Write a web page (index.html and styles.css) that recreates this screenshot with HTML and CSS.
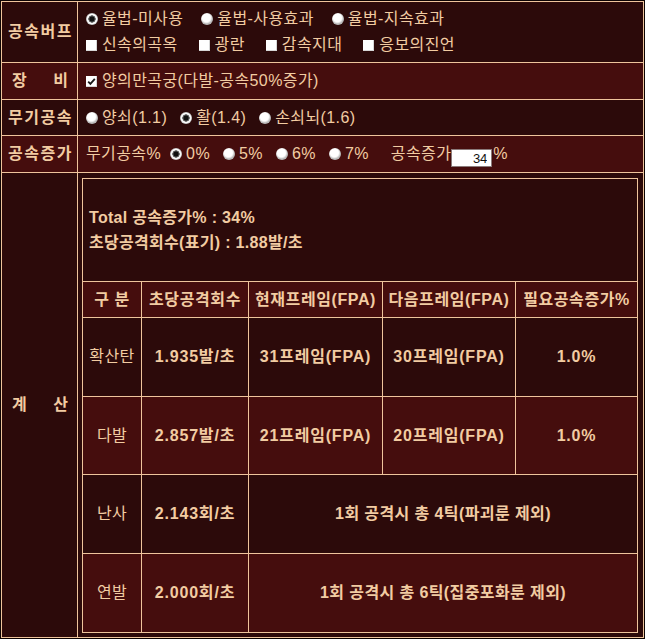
FILE: index.html
```html
<!DOCTYPE html>
<html lang="ko">
<head>
<meta charset="utf-8">
<title>공속 계산기</title>
<link rel="stylesheet" href="styles.css">
</head>
<body>
<div class="frame">
  <div class="label dark">공속버프</div>
  <div class="cell dark buff">
    <div class="line l1">
      <span class="opt"><span class="radio on"></span>율법-미사용</span>
      <span class="opt"><span class="radio"></span>율법-사용효과</span>
      <span class="opt"><span class="radio"></span>율법-지속효과</span>
    </div>
    <div class="line l2">
      <span class="opt"><span class="check"></span>신속의곡옥</span>
      <span class="opt"><span class="check"></span>광란</span>
      <span class="opt"><span class="check"></span>감속지대</span>
      <span class="opt"><span class="check"></span>응보의진언</span>
    </div>
  </div>

  <div class="label red spread"><span>장</span><span>비</span></div>
  <div class="cell red">
    <span class="opt"><span class="check on"><svg viewBox="0 0 11 11" width="11" height="11"><path d="M2.2 5.6 L4.4 7.9 L8.8 2.8" fill="none" stroke="#1a1a1a" stroke-width="1.8"/></svg></span>양의만곡궁(다발-공속50%증가)</span>
  </div>

  <div class="label dark">무기공속</div>
  <div class="cell dark r3">
    <span class="opt"><span class="radio"></span>양쇠(1.1)</span>
    <span class="opt"><span class="radio on"></span>활(1.4)</span>
    <span class="opt"><span class="radio"></span>손쇠뇌(1.6)</span>
  </div>

  <div class="label red">공속증가</div>
  <div class="cell red r4">
    <span class="txt first">무기공속%</span>
    <span class="opt"><span class="radio on"></span>0%</span>
    <span class="opt"><span class="radio"></span>5%</span>
    <span class="opt"><span class="radio"></span>6%</span>
    <span class="opt"><span class="radio"></span>7%</span>
    <span class="extra">공속증가<input class="num" type="text" value="34" readonly><span class="pct">%</span></span>
  </div>

  <div class="label dark spread"><span>계</span><span>산</span></div>
  <div class="cell dark calc">
    <div class="grid">
      <div class="g total dark">
        <div>Total 공속증가% : 34%</div>
        <div>초당공격회수(표기) : 1.88발/초</div>
      </div>

      <div class="g red hd">구 분</div>
      <div class="g red hd">초당공격회수</div>
      <div class="g red hd">현재프레임(FPA)</div>
      <div class="g red hd">다음프레임(FPA)</div>
      <div class="g red hd">필요공속증가%</div>

      <div class="g dark nm">확산탄</div>
      <div class="g dark bd">1.935발/초</div>
      <div class="g dark bd">31프레임(FPA)</div>
      <div class="g dark bd">30프레임(FPA)</div>
      <div class="g dark bd">1.0%</div>

      <div class="g red nm">다발</div>
      <div class="g red bd">2.857발/초</div>
      <div class="g red bd">21프레임(FPA)</div>
      <div class="g red bd">20프레임(FPA)</div>
      <div class="g red bd">1.0%</div>

      <div class="g dark nm">난사</div>
      <div class="g dark bd">2.143회/초</div>
      <div class="g dark bd span3">1회 공격시 총 4틱(파괴룬 제외)</div>

      <div class="g red nm">연발</div>
      <div class="g red bd">2.000회/초</div>
      <div class="g red bd span3">1회 공격시 총 6틱(집중포화룬 제외)</div>
    </div>
  </div>
</div>
</body>
</html>
```

FILE: styles.css
```css
html, body {
  margin: 0;
  background: #0c0303;
}
body {
  padding: 1px;
  font-family: "Liberation Sans", "Noto Sans CJK KR", sans-serif;
  font-size: 16px;
  color: #f2cca2;
}

.frame {
  display: grid;
  grid-template-columns: 75px 565px;
  grid-template-rows: 60px 36px 35px 36px 464px;
  gap: 1px;
  padding: 1px;
  width: 643px;
  box-sizing: border-box;
  background: #efc49c;
}

.dark { background: #2c0a0a; }
.red { background: #450d0d; }

.label {
  display: flex;
  align-items: center;
  justify-content: center;
  font-size: 16px;
  font-weight: bold;
  line-height: 20px;
  letter-spacing: 1.5px;
  padding-left: 2px;
}
.label.spread {
  justify-content: space-between;
  padding: 0 9px 0 10px;
  letter-spacing: 0;
}

.cell {
  display: flex;
  align-items: center;
  padding-left: 8px;
  line-height: 20px;
  white-space: nowrap;
  letter-spacing: 0.4px;
}

.buff {
  flex-direction: column;
  align-items: flex-start;
  justify-content: center;
}
.line {
  display: flex;
  align-items: center;
  height: 26px;
}
.l1 { gap: 18px; }
.l2 { gap: 21px; }
.r3 { gap: 13px; }
.r4 { gap: 13px; }
.r4 .first { margin-right: -4px; }
.r4 .extra {
  display: inline-flex;
  align-items: center;
  margin-left: 9px;
}
.r4 .pct { margin-left: 1px; }

.opt {
  display: inline-flex;
  align-items: center;
}

.radio {
  display: inline-block;
  width: 12px;
  height: 12px;
  border-radius: 50%;
  margin-right: 4px;
  background: radial-gradient(circle at 45% 40%, #ffffff 0 4px, #e4e4e4 5px, #b9b9b9 6px);
}
.radio.on {
  background: radial-gradient(circle, #101010 0 2.2px, #555 2.8px 3.4px, #fafafa 3.9px 4.8px, #c9c9c9 5.6px);
}

.check {
  display: inline-block;
  width: 11px;
  height: 11px;
  margin-right: 5px;
  background: #ffffff;
  box-shadow: inset -1px -1px 0 #d6d6d6;
}
.check svg { display: block; }

.num {
  width: 41px;
  height: 18px;
  box-sizing: border-box;
  margin: 8px 0 0 0;
  padding: 0 4px 0 0;
  border: 1px solid #8a7a7a;
  background: #ffffff;
  color: #111;
  font-family: "Liberation Sans", sans-serif;
  font-size: 13px;
  letter-spacing: 0;
  text-align: right;
  outline: none;
}

.calc {
  display: block;
  padding: 5px 5px 4px 4px;
}

.grid {
  display: grid;
  grid-template-columns: 58px 106px 133px 132px 121px;
  grid-template-rows: 102px 35px 78px 77px 78px 78px;
  gap: 1px;
  padding: 1px;
  width: 556px;
  box-sizing: border-box;
  background: #efc49c;
}

.g {
  display: flex;
  align-items: center;
  justify-content: center;
  font-size: 16px;
  line-height: 20px;
  white-space: nowrap;
}
.total {
  grid-column: 1 / 6;
  flex-direction: column;
  align-items: flex-start;
  padding-left: 6px;
  font-weight: bold;
  line-height: 25px;
  letter-spacing: 0.3px;
}
.hd { font-weight: bold; letter-spacing: 0.6px; }
.bd { font-weight: bold; letter-spacing: 0.8px; }
.span3 { grid-column: 3 / 6; letter-spacing: 0.4px; }
```
